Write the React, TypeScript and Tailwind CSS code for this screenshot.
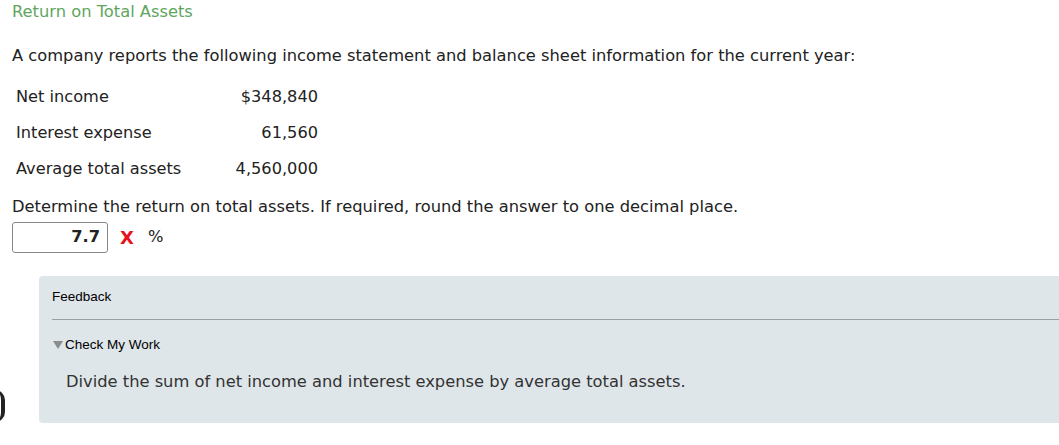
import React from "react";

export default function App() {
  const verdana = { fontFamily: "Verdana, 'DejaVu Sans', sans-serif" };
  const arial = { fontFamily: "Arial, 'Liberation Sans', sans-serif" };
  return (
    <div className="relative w-[1059px] h-[445px] bg-white overflow-hidden text-[#333]" style={verdana}>
      <div className="pl-[12px] pt-[2px]">
        <div className="text-[16.3px] leading-[20px] text-[#5fa55f]">Return on Total Assets</div>
        <div className="mt-[24px] text-[16.3px] leading-[20px] text-[#222]">
          A company reports the following income statement and balance sheet information for the current year:
        </div>
        <table className="mt-[13px] ml-[4px] text-[16.2px] text-[#222] border-collapse">
          <tbody>
            <tr className="h-[36px]">
              <td className="w-[200px] p-0">Net income</td>
              <td className="w-[102px] p-0 text-right">$348,840</td>
            </tr>
            <tr className="h-[36px]">
              <td className="p-0">Interest expense</td>
              <td className="p-0 text-right">61,560</td>
            </tr>
            <tr className="h-[36px]">
              <td className="p-0">Average total assets</td>
              <td className="p-0 text-right">4,560,000</td>
            </tr>
          </tbody>
        </table>
        <div className="mt-[10px] text-[16.3px] leading-[20px] text-[#222]">
          Determine the return on total assets. If required, round the answer to one decimal place.
        </div>
        <div className="mt-[5px] flex items-center">
          <div className="w-[96px] h-[31px] border border-[#888] rounded-[3px] flex items-center justify-end pr-[7px] text-[16.3px] font-bold text-[#222]">
            7.7
          </div>
          <span className="ml-[12px] text-[#e8121c] text-[18px] font-bold leading-none">X</span>
          <span className="ml-[14px] text-[16.3px] text-[#222]">%</span>
        </div>
      </div>

      <div className="absolute left-0 top-[390px] w-[20px] h-[32px] -ml-[15px] rounded-full border-r-[4px] border-[#222]" />

      <div className="ml-[39px] mt-[23px] w-[1040px] h-[147px] bg-[#dfe6e9] rounded-[4px] pl-[13px]">
        <div className="pt-[11px] h-[44px] text-[13.5px] text-black border-b border-[#9aa1a3]" style={arial}>
          Feedback
        </div>
        <div className="mt-[15px] flex items-center text-[13.5px] text-black" style={arial}>
          <svg width="10" height="8" viewBox="0 0 10 8" className="ml-[1px] mr-[2px]">
            <polygon points="0,0 10,0 5,8" fill="#8c8c8c" />
          </svg>
          Check My Work
        </div>
        <div className="mt-[17px] pl-[14px] text-[16.3px] leading-[20px] text-[#333]">
          Divide the sum of net income and interest expense by average total assets.
        </div>
      </div>
    </div>
  );
}
